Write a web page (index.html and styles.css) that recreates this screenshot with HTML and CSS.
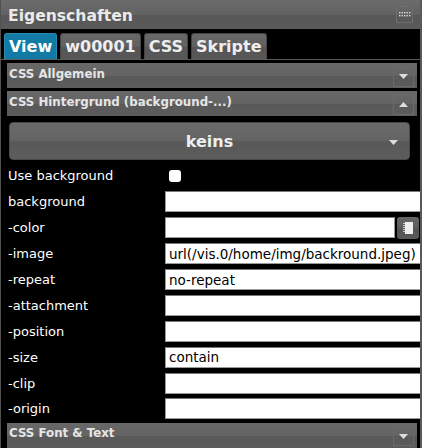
FILE: index.html
```html
<!DOCTYPE html>
<html>
<head>
<meta charset="utf-8">
<link rel="stylesheet" href="styles.css">
</head>
<body>
<div class="panel">
  <div class="title">
    <span class="title-text">Eigenschaften</span>
    <span class="handle">
      <svg width="12" height="5" viewBox="0 0 12 5"><g fill="#ddd">
        <rect x="0" y="0" width="1.4" height="1.4"/><rect x="2.5" y="0" width="1.4" height="1.4"/><rect x="5" y="0" width="1.4" height="1.4"/><rect x="7.5" y="0" width="1.4" height="1.4"/><rect x="10" y="0" width="1.4" height="1.4"/>
        <rect x="0" y="3" width="1.4" height="1.4"/><rect x="2.5" y="3" width="1.4" height="1.4"/><rect x="5" y="3" width="1.4" height="1.4"/><rect x="7.5" y="3" width="1.4" height="1.4"/><rect x="10" y="3" width="1.4" height="1.4"/>
      </g></svg>
    </span>
  </div>
  <div class="tabs">
    <span class="tab active">View</span>
    <span class="tab">w00001</span>
    <span class="tab">CSS</span>
    <span class="tab">Skripte</span>
  </div>
  <div class="content">
    <div class="acc-head">
      <span>CSS Allgemein</span>
      <span class="acc-icon"><svg width="9" height="5" viewBox="0 0 9 5"><path d="M0 0H9L4.5 5Z" fill="#ddd"/></svg></span>
    </div>
    <div class="acc-head">
      <span>CSS Hintergrund (background-...)</span>
      <span class="acc-icon"><svg width="9" height="5" viewBox="0 0 9 5"><path d="M0 5H9L4.5 0Z" fill="#ddd"/></svg></span>
    </div>
    <div class="acc-body">
      <div class="select">
        <span class="select-text">keins</span>
        <svg class="select-arrow" width="9" height="5" viewBox="0 0 9 5"><path d="M0 0H9L4.5 5Z" fill="#ddd"/></svg>
      </div>
      <div class="row"><span class="label">Use background</span><span class="field"><span class="check"></span></span></div>
      <div class="row"><span class="label">background</span><span class="field"><span class="input"></span></span></div>
      <div class="row"><span class="label">-color</span><span class="field"><span class="input short"></span><span class="pick"><svg width="12" height="14" viewBox="0 0 12 14"><rect x="3" y="1" width="8" height="12" fill="#eee"/><g fill="#ccc"><rect x="1" y="2" width="2" height="1"/><rect x="1" y="4" width="2" height="1"/><rect x="1" y="6" width="2" height="1"/><rect x="1" y="8" width="2" height="1"/><rect x="1" y="10" width="2" height="1"/></g></svg></span></span></div>
      <div class="row"><span class="label">-image</span><span class="field"><span class="input">url(/vis.0/home/img/backround.jpeg)</span></span></div>
      <div class="row"><span class="label">-repeat</span><span class="field"><span class="input">no-repeat</span></span></div>
      <div class="row"><span class="label">-attachment</span><span class="field"><span class="input"></span></span></div>
      <div class="row"><span class="label">-position</span><span class="field"><span class="input"></span></span></div>
      <div class="row"><span class="label">-size</span><span class="field"><span class="input">contain</span></span></div>
      <div class="row"><span class="label">-clip</span><span class="field"><span class="input"></span></span></div>
      <div class="row"><span class="label">-origin</span><span class="field"><span class="input"></span></span></div>
    </div>
    <div class="acc-head last">
      <span>CSS Font &amp; Text</span>
      <span class="acc-icon"><svg width="9" height="5" viewBox="0 0 9 5"><path d="M0 0H9L4.5 5Z" fill="#ddd"/></svg></span>
    </div>
  </div>
</div>
</body>
</html>
```
FILE: styles.css
```css
html, body {
  margin: 0;
  padding: 0;
  background: #000;
  overflow: hidden;
}
body {
  font-family: "DejaVu Sans", Verdana, sans-serif;
  width: 422px;
  height: 448px;
}
.panel {
  width: 422px;
  height: 448px;
  box-sizing: border-box;
  border-left: 1px solid #505050;
  border-right: 2px solid #5a5a5a;
  background: #000;
  overflow: hidden;
}
.title {
  height: 29px;
  box-sizing: border-box;
  display: flex;
  align-items: center;
  justify-content: space-between;
  padding: 0 7px 0 7px;
  background: linear-gradient(#6b6b6b 0%, #626262 50%, #575757 51%, #5a5a5a 100%);
}
.title-text {
  font-weight: bold;
  font-size: 15.6px;
  color: #eaeaea;
  margin-top: 3px;
}
.handle {
  width: 17px;
  height: 17px;
  box-sizing: border-box;
  border: 1px solid #6e6e6e;
  display: flex;
  align-items: center;
  justify-content: center;
}
.tabs {
  display: flex;
  gap: 3px;
  padding: 4px 0 0 3px;
  height: 31px;
  box-sizing: border-box;
  border-bottom: 1px solid #5a5a5a;
  margin-bottom: 1px;
}
.tab {
  height: 26px;
  box-sizing: border-box;
  padding: 0 4px;
  display: flex;
  align-items: center;
  font-weight: bold;
  font-size: 16px;
  color: #eee;
  border: 1px solid #444;
  border-bottom: none;
  border-radius: 3px 3px 0 0;
  background: linear-gradient(#686868 0%, #606060 50%, #555 51%, #585858 100%);
}
.tab.active {
  background: #117ba6;
  border-color: #2a8ab3;
  color: #fff;
}
.content {
  padding: 2px 3px 0 6px;
}
.acc-head {
  height: 25px;
  box-sizing: border-box;
  display: flex;
  align-items: center;
  justify-content: space-between;
  padding: 0 3px 0 2px;
  margin-bottom: 3px;
  font-weight: bold;
  font-size: 11.8px;
  color: #e6e6e6;
  background: linear-gradient(#686868 0%, #646464 50%, #595959 52%, #5c5c5c 100%);
}
.acc-head > span:first-child {
  margin-top: -4px;
}
.acc-icon {
  width: 21px;
  height: 20px;
  box-sizing: border-box;
  border: 1px solid #6a6a6a;
  display: flex;
  align-items: center;
  justify-content: center;
  margin-top: 2px;
}
.acc-body {
  padding: 1px 0 0 1px;
  margin-top: -2px;
  margin-right: -5px;
}
.select {
  position: relative;
  margin: 4px 12px 3px 1px;
  height: 38px;
  box-sizing: border-box;
  border: 1px solid #4a4a4a;
  border-radius: 4px;
  display: flex;
  align-items: center;
  justify-content: center;
  background: linear-gradient(#6a6a6a 0%, #646464 48%, #585858 52%, #5d5d5d 100%);
}
.select-text {
  font-weight: bold;
  font-size: 16px;
  color: #eee;
}
.select-arrow {
  position: absolute;
  right: 11px;
  top: 17px;
}
.row {
  height: 25.9px;
  display: flex;
  align-items: center;
}
.label {
  width: 157px;
  font-size: 13px;
  color: #fff;
  padding-left: 0;
}
.field {
  flex: 1;
  display: flex;
  align-items: center;
  gap: 2px;
}
.check {
  width: 12px;
  height: 12px;
  box-sizing: border-box;
  background: #fff;
  border-radius: 3px;
  margin-left: 4px;
}
.input {
  flex: 1;
  height: 21px;
  box-sizing: border-box;
  background: #fff;
  border: 1px solid #9a9a9a;
  border-top-color: #777;
  font-size: 13.5px;
  color: #000;
  padding-left: 3px;
  display: flex;
  align-items: center;
  white-space: nowrap;
  overflow: hidden;
}
.pick {
  width: 22px;
  height: 22px;
  box-sizing: border-box;
  border-radius: 3px;
  background: linear-gradient(#666 0%, #5e5e5e 50%, #555 51%, #585858 100%);
  display: flex;
  align-items: center;
  justify-content: center;
  margin-right: 3px;
}
.acc-head.last {
  margin-top: 1px;
}
```
